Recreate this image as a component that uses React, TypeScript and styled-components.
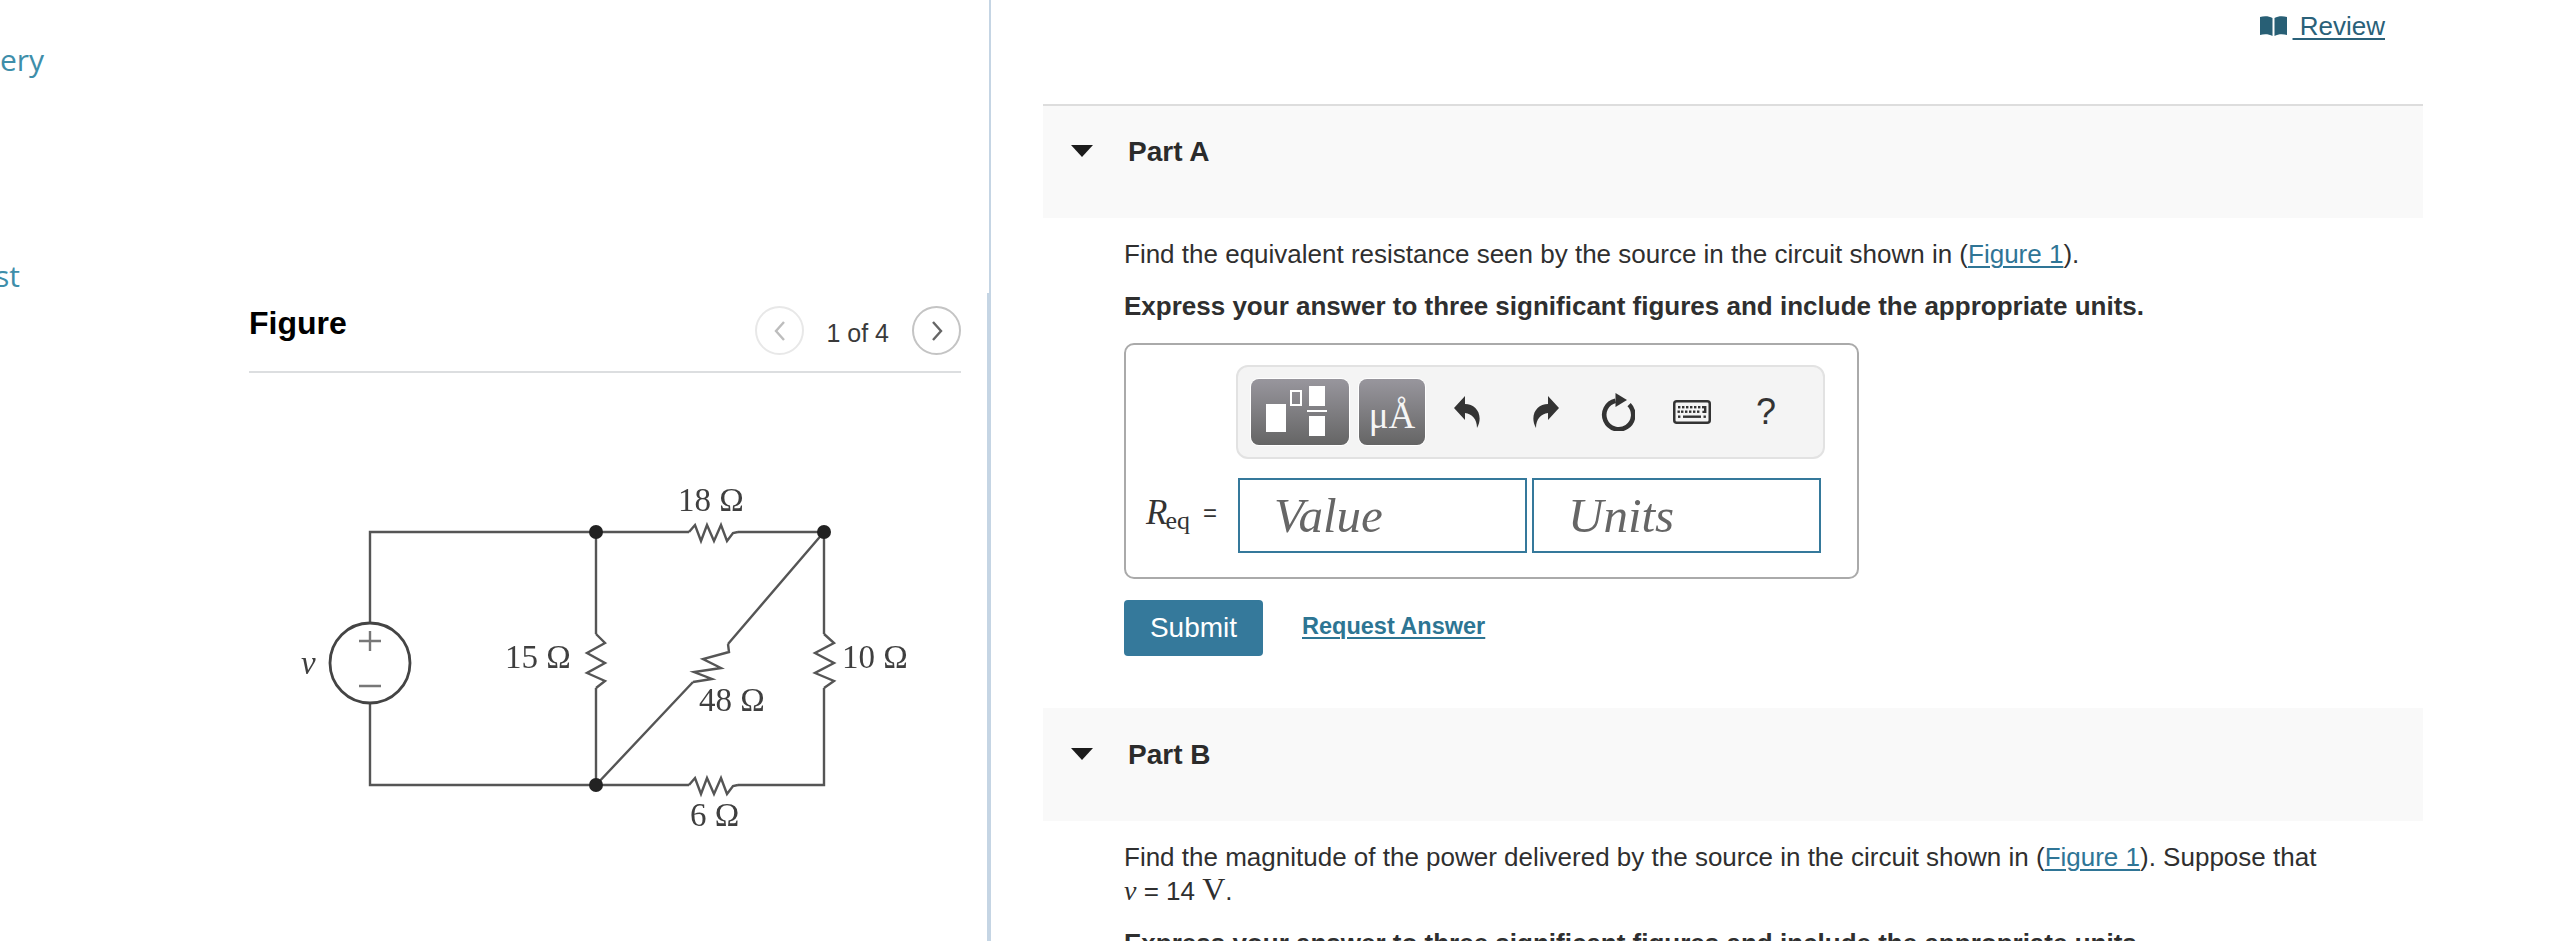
import React from 'react';
import styled, { createGlobalStyle } from 'styled-components';

const GlobalStyle = createGlobalStyle`
  html, body {
    margin: 0;
    height: 100%;
    overflow: hidden;
    background: #fff;
  }
  body {
    font-family: "Liberation Sans", Arial, sans-serif;
    color: #2f2f2f;
  }
`;

const Page = styled.div`
  display: flex;
  height: 100vh;
  overflow: hidden;
`;

const LeftPane = styled.aside`
  flex: 0 0 991px;
  box-sizing: border-box;
  display: flex;
  flex-direction: column;
  border-right: 2px solid #c5d5e4;
  overflow: hidden;
`;

const SideNav = styled.nav`
  flex: 0 0 293px;
  min-height: 0;
  box-sizing: border-box;
  padding-top: 40px;
  display: flex;
  flex-direction: column;
  gap: 176px;
`;

const SideLink = styled.a<{ $offset: number }>`
  display: block;
  margin-left: ${(p) => p.$offset}px;
  font-family: "Open Sans", sans-serif;
  font-size: 30px;
  line-height: 40px;
  color: #3e8eaa;
`;

const FigurePanel = styled.section`
  flex: 1;
  box-sizing: border-box;
  padding: 0 26px 0 249px;
  border-right: 2px solid #c5d5e4;
`;

const FigureHeader = styled.header`
  display: flex;
  justify-content: space-between;
  padding: 13px 0 16px;
  border-bottom: 2px solid #dcdee0;
`;

const FigureTitle = styled.h2`
  margin: 0;
  font-size: 32px;
  line-height: 34px;
  font-weight: 700;
  color: #000;
`;

const Pager = styled.div`
  display: flex;
  align-items: center;
`;

const PagerLabel = styled.span`
  margin: 4px 23px 0 22px;
  font-size: 25px;
  line-height: 30px;
  color: #3a3a3a;
`;

const PagerButton = styled.button<{ $enabled: boolean }>`
  box-sizing: border-box;
  width: 49px;
  height: 49px;
  padding: 0;
  display: flex;
  align-items: center;
  justify-content: center;
  background: #fff;
  border-radius: 50%;
  border: 2px solid ${(p) => (p.$enabled ? '#c4c4c4' : '#e8e8e8')};
  color: ${(p) => (p.$enabled ? '#666' : '#bdbdbd')};
`;

const CircuitFigure = styled.svg`
  display: block;
  margin: 88px 0 0 1px;
  filter: blur(0.6px);
  font-family: "Liberation Serif", serif;
  font-size: 33px;
  fill: #3f3f3f;
`;

const RightPane = styled.main`
  flex: 1;
  box-sizing: border-box;
  padding: 0 139px 0 52px;
  overflow: hidden;
`;

const ReviewBar = styled.div`
  height: 104px;
  box-sizing: border-box;
  padding: 10px 38px 0 0;
  display: flex;
  justify-content: flex-end;
  align-items: flex-start;
`;

const ReviewLink = styled.a`
  display: flex;
  align-items: center;
  gap: 6px;
  font-size: 26px;
  line-height: 32px;
  color: #2a6179;
  white-space: pre;
  span {
    text-decoration: underline;
    text-decoration-thickness: 2px;
    text-underline-offset: 3px;
  }
`;

const PartHeader = styled.header<{ $ruled?: boolean }>`
  box-sizing: border-box;
  height: ${(p) => (p.$ruled ? 114 : 113)}px;
  padding: ${(p) => (p.$ruled ? 30 : 31)}px 0 0 28px;
  display: flex;
  gap: 35px;
  background: #f9f9f9;
  border-top: ${(p) => (p.$ruled ? '2px solid #dddddd' : 'none')};
`;

const Caret = styled.span`
  margin-top: 9px;
  width: 0;
  height: 0;
  border-left: 11px solid transparent;
  border-right: 11px solid transparent;
  border-top: 12px solid #1c1c1c;
`;

const PartTitle = styled.h3`
  margin: 0;
  font-size: 28px;
  line-height: 32px;
  font-weight: 700;
  color: #2b2b2b;
`;

const PartBody = styled.div`
  padding: 20px 0 0 81px;
`;

const Prompt = styled.p`
  margin: 0 0 20px;
  font-size: 26px;
  line-height: 32px;
`;

const Instruction = styled(Prompt)`
  font-weight: 700;
`;

const FigureLink = styled.a`
  color: #2f7596;
  text-decoration: underline;
  text-decoration-thickness: 2px;
  text-underline-offset: 3px;
`;

const InlineMath = styled.span`
  white-space: nowrap;
  em, b {
    font-family: "Liberation Serif", serif;
    font-weight: 400;
  }
  em {
    font-size: 28px;
  }
  b {
    font-size: 32px;
  }
`;

const AnswerBox = styled.div`
  box-sizing: border-box;
  width: 735px;
  height: 236px;
  margin-top: 21px;
  padding: 20px 0 0 20px;
  border: 2px solid #aaaaaa;
  border-radius: 10px;
`;

const Toolbar = styled.div`
  box-sizing: border-box;
  width: 589px;
  height: 94px;
  margin-left: 90px;
  padding-left: 13px;
  display: flex;
  align-items: center;
  background: #f4f4f4;
  border: 2px solid #e2e2e2;
  border-radius: 12px;
`;

const PaletteButton = styled.button<{ $wide?: boolean }>`
  box-sizing: border-box;
  width: ${(p) => (p.$wide ? 98 : 66)}px;
  height: 66px;
  margin-right: ${(p) => (p.$wide ? 10 : 0)}px;
  padding: ${(p) => (p.$wide ? 0 : '7px 0 0')};
  border: none;
  border-radius: 8px;
  display: flex;
  align-items: center;
  justify-content: center;
  background: linear-gradient(#98969d, #656565);
  box-shadow: 0 0 0 1px #fff;
  font-family: "Liberation Serif", serif;
  font-size: 37px;
  line-height: 59px;
  color: #f5f5f5;
`;

const ToolSlot = styled.span<{ $gap: number }>`
  display: flex;
  margin-left: ${(p) => p.$gap}px;
  color: #333;
`;

const HelpMark = styled.span`
  margin-left: 45px;
  font-size: 36px;
  line-height: 40px;
  color: #333;
`;

const InputRow = styled.div`
  display: flex;
  margin-top: 19px;
`;

const VarLabel = styled.div`
  flex: 0 0 92px;
  display: flex;
  align-items: center;
  font-size: 24px;
  color: #333;
  padding-bottom: 5px;
  box-sizing: border-box;
`;

const VarName = styled.span`
  font-family: "Liberation Serif", serif;
  font-style: italic;
  font-size: 35px;
  margin-right: 13px;
  sub {
    font-style: normal;
    font-size: 26px;
    line-height: 0;
    margin-left: -2px;
    vertical-align: -5px;
  }
`;

const AnswerInput = styled.div`
  box-sizing: border-box;
  width: 289px;
  height: 75px;
  margin-right: 5px;
  padding-left: 34px;
  border: 2px solid #35799b;
  font-family: "Liberation Serif", serif;
  font-style: italic;
  font-size: 49px;
  line-height: 71px;
  color: #666;
`;

const ActionRow = styled.div`
  display: flex;
  align-items: center;
  gap: 39px;
  margin: 21px 0 52px;
`;

const SubmitButton = styled.button`
  width: 139px;
  height: 56px;
  padding: 0;
  border: none;
  border-radius: 4px;
  background: #35799b;
  font-family: inherit;
  font-size: 28px;
  color: #fff;
`;

const RequestLink = styled.a`
  margin-bottom: 3px;
  font-size: 23.5px;
  font-weight: 700;
  color: #2d7593;
  text-decoration: underline;
  text-decoration-thickness: 2px;
  text-underline-offset: 3px;
`;

const Chevron: React.FC<{ flip?: boolean }> = ({ flip }) => (
  <svg width="14" height="22" viewBox="0 0 14 22" fill="none">
    <polyline
      points={flip ? '11,2 3,11 11,20' : '3,2 11,11 3,20'}
      stroke="currentColor"
      strokeWidth="2.4"
    />
  </svg>
);

const BookIcon = () => (
  <svg width="27" height="21" viewBox="0 0 27 21" fill="#285f75">
    <path d="M0 1 C4 0 9 0 12.5 2 V20 C9 18 4 18 0 19 Z" />
    <path d="M27 1 C23 0 18 0 14.5 2 V20 C18 18 23 18 27 19 Z" />
  </svg>
);

const TemplatesIcon = () => (
  <svg width="98" height="66" viewBox="0 0 98 66" fill="#fff">
    <rect x="15" y="25" width="20" height="28" />
    <rect x="40" y="12" width="10" height="14" fill="none" stroke="#fff" strokeWidth="2" />
    <rect x="58" y="7" width="16" height="20" />
    <rect x="56" y="31" width="20" height="2" />
    <rect x="58" y="37" width="16" height="20" />
  </svg>
);

const UndoIcon: React.FC<{ flip?: boolean }> = ({ flip }) => (
  <svg width="27" height="32" viewBox="0 0 27 32" fill="currentColor">
    <path
      transform={flip ? 'translate(27 0) scale(-1 1)' : undefined}
      d="M0 12 L11 0 V8 C22 8 30 19 23 32 C23 23 18 18 11 17 V24 Z"
    />
  </svg>
);

const RefreshIcon = () => (
  <svg width="34" height="38" viewBox="0 0 34 38" fill="none">
    <path d="M28.1 11.7 A14.5 14.5 0 1 1 14.5 7.7" stroke="#333" strokeWidth="4.6" />
    <path d="M14.5 0 L26 7 L14.5 14 Z" fill="#333" />
  </svg>
);

const KeyboardIcon = () => (
  <svg width="38" height="24" viewBox="0 0 38 24" fill="#333">
    <rect x="1.25" y="1.25" width="35.5" height="21.5" rx="2.5" fill="none" stroke="#333" strokeWidth="2.5" />
    {[5, 9, 13, 17, 21, 25, 29].map((x) => (
      <rect key={x} x={x} y="6" width="2.4" height="2.4" />
    ))}
    {[8, 12, 16, 20, 24].map((x) => (
      <rect key={x} x={x} y="10.5" width="2.4" height="2.4" />
    ))}
    <path d="M31 6 h2.4 v7 h-4 v-2.2 h1.6 Z" />
    <rect x="4.5" y="10.5" width="2.4" height="2.4" />
    <rect x="10" y="15.5" width="18" height="2.4" />
    <rect x="5" y="15.5" width="2.4" height="2.4" />
    <rect x="30.5" y="15.5" width="2.4" height="2.4" />
  </svg>
);

// resistor outlines, in the figure's own coordinates
const zigTop = 'M439 71 L445 64 L451 80 L457 64 L464 80 L471 64 L477 80 L483 72 L488 71';
const zigBottom = 'M439 324 L445 317 L451 333 L457 317 L464 333 L471 317 L477 333 L483 325 L488 324';
const zigLeft = 'M346 173 L355 182 L337 192 L355 202 L337 212 L355 220 L346 227';
const zigRight = 'M574 173 L584 182 L565 192 L584 202 L565 212 L584 220 L574 227';
const zigDiagonal = 'M478 183 L479 191 L453 198 L471 207 L444 211 L462 218 L443 221';

const Circuit = () => (
  <CircuitFigure width="680" height="400" viewBox="0 0 680 400">
    <g fill="none" stroke="#555" strokeWidth="2.4">
      <path d="M120 162 V71 H439 M488 71 H574 V173 M574 227 V324 H488 M439 324 H120 V242" />
      <path d="M346 71 V173 M346 227 V324" />
      <path d="M574 71 L478 183 M443 221 L346 324" />
      <path d={zigTop} />
      <path d={zigBottom} />
      <path d={zigLeft} />
      <path d={zigRight} />
      <path d={zigDiagonal} />
      <circle cx="120" cy="202" r="40" stroke="#444" strokeWidth="2.8" />
      <path d="M109 180 H131 M120 170 V190 M109 225 H131" stroke="#777" />
    </g>
    <circle cx="346" cy="71" r="7" fill="#222" />
    <circle cx="574" cy="71" r="7" fill="#222" />
    <circle cx="346" cy="324" r="7" fill="#222" />
    <text x="428" y="50">18 Ω</text>
    <text x="255" y="207">15 Ω</text>
    <text x="592" y="207">10 Ω</text>
    <text x="449" y="250">48 Ω</text>
    <text x="440" y="365">6 Ω</text>
    <text x="51" y="213" fontStyle="italic">v</text>
  </CircuitFigure>
);

const App: React.FC = () => {
  return (
    <Page>
      <GlobalStyle />
      <LeftPane>
        <SideNav>
          <SideLink $offset={0}>ery</SideLink>
          <SideLink $offset={-5}>st</SideLink>
        </SideNav>
        <FigurePanel>
          <FigureHeader>
            <FigureTitle>Figure</FigureTitle>
            <Pager>
              <PagerButton $enabled={false}>
                <Chevron flip />
              </PagerButton>
              <PagerLabel>1 of 4</PagerLabel>
              <PagerButton $enabled>
                <Chevron />
              </PagerButton>
            </Pager>
          </FigureHeader>
          <Circuit />
        </FigurePanel>
      </LeftPane>
      <RightPane>
        <ReviewBar>
          <ReviewLink>
            <BookIcon />
            <span>{'\u00a0Review'}</span>
          </ReviewLink>
        </ReviewBar>

        <PartHeader $ruled>
          <Caret />
          <PartTitle>Part A</PartTitle>
        </PartHeader>
        <PartBody>
          <Prompt>
            Find the equivalent resistance seen by the source in the circuit shown in (
            <FigureLink>Figure 1</FigureLink>).
          </Prompt>
          <Instruction>Express your answer to three significant figures and include the appropriate units.</Instruction>
          <AnswerBox>
            <Toolbar>
              <PaletteButton $wide>
                <TemplatesIcon />
              </PaletteButton>
              <PaletteButton>μÅ</PaletteButton>
              <ToolSlot $gap={29}>
                <UndoIcon />
              </ToolSlot>
              <ToolSlot $gap={51}>
                <UndoIcon flip />
              </ToolSlot>
              <ToolSlot $gap={42}>
                <RefreshIcon />
              </ToolSlot>
              <ToolSlot $gap={38}>
                <KeyboardIcon />
              </ToolSlot>
              <HelpMark>?</HelpMark>
            </Toolbar>
            <InputRow>
              <VarLabel>
                <VarName>
                  R<sub>eq</sub>
                </VarName>
                =
              </VarLabel>
              <AnswerInput>Value</AnswerInput>
              <AnswerInput>Units</AnswerInput>
            </InputRow>
          </AnswerBox>
          <ActionRow>
            <SubmitButton>Submit</SubmitButton>
            <RequestLink>Request Answer</RequestLink>
          </ActionRow>
        </PartBody>

        <PartHeader>
          <Caret />
          <PartTitle>Part B</PartTitle>
        </PartHeader>
        <PartBody>
          <Prompt>
            Find the magnitude of the power delivered by the source in the circuit shown in (
            <FigureLink>Figure 1</FigureLink>). Suppose that{' '}
            <InlineMath>
              <em>v</em> = 14 <b>V</b>.
            </InlineMath>
          </Prompt>
          <Instruction>Express your answer to three significant figures and include the appropriate units.</Instruction>
        </PartBody>
      </RightPane>
    </Page>
  );
};

export default App;
